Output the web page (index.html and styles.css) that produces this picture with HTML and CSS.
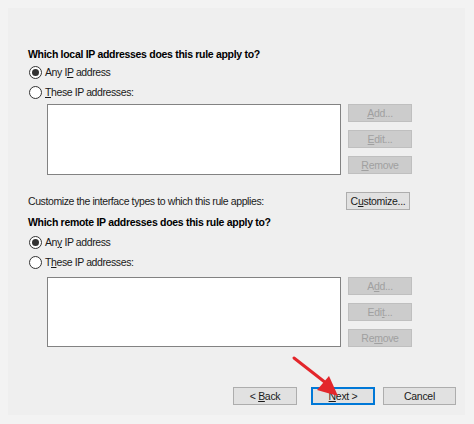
FILE: index.html
```html
<!DOCTYPE html>
<html>
<head>
    <meta charset="UTF-8">
    <title>Scope</title>
    <link rel="stylesheet" href="styles.css">
</head>
<body>
    <div class="window">
        <!-- Local addresses -->
        <div class="section local">
            <h3>Which local IP addresses does this rule apply to?</h3>
            <div class="radio-row"><span class="radio checked"></span><span>Any I<u>P</u> address</span></div>
            <div class="radio-row"><span class="radio"></span><span><u>T</u>hese IP addresses:</span></div>
            <div class="list-row">
                <div class="listbox"></div>
                <div class="side-buttons">
                    <button class="btn" disabled><u>A</u>dd...</button>
                    <button class="btn" disabled><u>E</u>dit...</button>
                    <button class="btn" disabled><u>R</u>emove</button>
                </div>
            </div>
        </div>

        <div class="customize-row">
            <span>Customize the interface types to which this rule applies:</span>
            <button class="btn">C<u>u</u>stomize...</button>
        </div>

        <!-- Remote addresses -->
        <div class="section remote">
            <h3>Which remote IP addresses does this rule apply to?</h3>
            <div class="radio-row"><span class="radio checked"></span><span>An<u>y</u> IP address</span></div>
            <div class="radio-row"><span class="radio"></span><span>T<u>h</u>ese IP addresses:</span></div>
            <div class="list-row">
                <div class="listbox"></div>
                <div class="side-buttons">
                    <button class="btn" disabled>A<u>d</u>d...</button>
                    <button class="btn" disabled>Edi<u>t</u>...</button>
                    <button class="btn" disabled>Re<u>m</u>ove</button>
                </div>
            </div>
        </div>

        <div class="footer">
            <button class="btn">&lt; <u>B</u>ack</button>
            <button class="btn focused"><u>N</u>ext &gt;</button>
            <button class="btn cancel">Cancel</button>
        </div>

        <!-- red annotation arrow -->
        <svg class="arrow" width="60" height="50" viewBox="0 0 60 50">
            <line x1="4" y1="4" x2="36" y2="29" stroke="#e3262b" stroke-width="3" stroke-linecap="round"/>
            <polygon points="48,42 27,36 39,22" fill="#e3262b"/>
        </svg>
    </div>
</body>
</html>
```

FILE: styles.css
```css
body {
    margin: 0;
    background-color: #f3f3f3;
    font-family: 'Liberation Sans', Arial, sans-serif;
    font-size: 10.5px;
    letter-spacing: -0.4px;
    color: #1a1a1a;
}
.window {
    position: relative;
    margin: 8px 9px 0 8px;
    height: 407px;
    background-color: #efefef;
    padding: 38px 0 0 20px;
    box-sizing: border-box;
}
h3 {
    margin: 0;
    font-size: 10.5px;
    letter-spacing: -0.3px;
    line-height: 16px;
    font-weight: bold;
    color: #000;
}
.radio-row {
    display: flex;
    align-items: center;
    height: 20px;
    padding-left: 1px;
}
.radio {
    width: 13px;
    height: 13px;
    border: 1px solid #333;
    border-radius: 50%;
    background-color: #fff;
    margin-right: 3px;
    position: relative;
    box-sizing: border-box;
}
.radio.checked::after {
    content: "";
    position: absolute;
    left: 2px;
    top: 2px;
    width: 7px;
    height: 7px;
    border-radius: 50%;
    background-color: #333;
}
.list-row {
    display: flex;
    margin-left: 19px;
}
.listbox {
    width: 294px;
    background-color: #fff;
    border: 1px solid #828282;
    box-sizing: border-box;
}
.local .list-row {
    margin-top: 2px;
}
.local .listbox {
    height: 71px;
}
.remote .list-row {
    margin-top: 5px;
}
.remote .listbox {
    height: 70px;
}
.side-buttons {
    display: flex;
    flex-direction: column;
    gap: 8px;
    margin-left: 7px;
}
.btn {
    width: 64px;
    height: 18px;
    padding: 0;
    font-family: inherit;
    font-size: 10.5px;
    letter-spacing: -0.3px;
    border: 1px solid #adadad;
    background-color: #e1e1e1;
    color: #1a1a1a;
    box-sizing: border-box;
}
.btn:disabled {
    background-color: #cccccc;
    border-color: #bfbfbf;
    color: #a0a0a0;
}
.customize-row {
    display: flex;
    align-items: center;
    justify-content: space-between;
    width: 382px;
    margin-top: 17px;
}
.remote {
    margin-top: 4px;
}
.remote h3 + .radio-row {
    margin-top: 2px;
}
.footer {
    display: flex;
    gap: 14px;
    margin-top: 40px;
    margin-left: 205px;
}
.btn.focused {
    border: 2px solid #0078d7;
}
.btn.cancel {
    width: 73px;
    margin-left: -6px;
}
.arrow {
    position: absolute;
    left: 282px;
    top: 346px;
}
```
